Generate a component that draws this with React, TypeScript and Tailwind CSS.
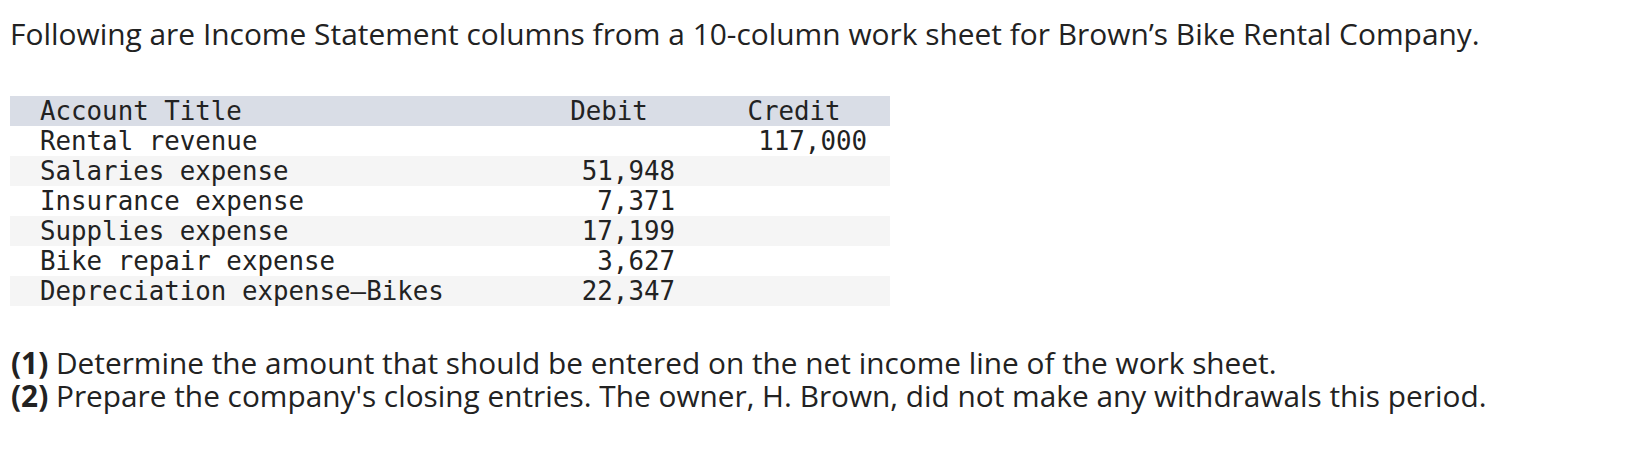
const rows = [
  { title: "Rental revenue", debit: "", credit: "117,000" },
  { title: "Salaries expense", debit: "51,948", credit: "" },
  { title: "Insurance expense", debit: "7,371", credit: "" },
  { title: "Supplies expense", debit: "17,199", credit: "" },
  { title: "Bike repair expense", debit: "3,627", credit: "" },
  { title: "Depreciation expense—Bikes", debit: "22,347", credit: "" },
];

export default function App() {
  return (
    <div className="w-[1640px] h-[458px] bg-white text-[#222] font-['Open_Sans',sans-serif]">
      <p className="pl-[10px] pt-[16px] text-[29.9px] leading-[36px]">
        Following are Income Statement columns from a 10-column work sheet for Brown’s Bike Rental Company.
      </p>

      <table className="ml-[10px] mt-[44px] w-[880px] border-collapse font-['DejaVu_Sans_Mono',monospace] text-[25.8px] leading-[30px]">
        <thead>
          <tr className="bg-[#d9dde6]">
            <th className="w-[510px] pl-[30px] text-left font-normal">Account Title</th>
            <th className="w-[178px] text-center font-normal">Debit</th>
            <th className="w-[192px] text-center font-normal">Credit</th>
          </tr>
        </thead>
        <tbody>
          {rows.map((r, i) => (
            <tr key={i} className={i % 2 === 1 ? "bg-[#f5f5f5]" : "bg-white"}>
              <td className="pl-[30px] h-[30px] p-0">{r.title}</td>
              <td className="pr-[23px] text-right">{r.debit}</td>
              <td className="pr-[23px] text-right">{r.credit}</td>
            </tr>
          ))}
        </tbody>
      </table>

      <div className="pl-[11px] mt-[40px] text-[29.8px] leading-[33px]">
        <p>
          <b>(1)</b> Determine the amount that should be entered on the net income line of the work sheet.
        </p>
        <p>
          <b>(2)</b> Prepare the company's closing entries. The owner, H. Brown, did not make any withdrawals this period.
        </p>
      </div>
    </div>
  );
}
